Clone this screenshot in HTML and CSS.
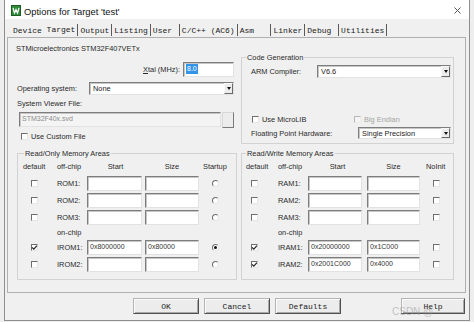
FILE: index.html
```html
<!DOCTYPE html>
<html>
<head>
<meta charset="utf-8">
<title>Options for Target 'test'</title>
<link rel="stylesheet" href="styles.css">
</head>
<body>
<div class="window">
  <div class="titlebar">
    <svg class="appicon" width="10" height="11" viewBox="0 0 10 11">
      <rect x="0.5" y="0.5" width="9" height="10" fill="#2f8a3a" stroke="#1d5e25"/>
      <path d="M2 3 L3.5 8 L5 4.5 L6.5 8 L8 3" fill="none" stroke="#ffffff" stroke-width="1.2"/>
    </svg>
    <span class="title">Options for Target 'test'</span>
    <svg class="close" width="7" height="7" viewBox="0 0 7 7">
      <path d="M0.5 0.5 L6.5 6.5 M6.5 0.5 L0.5 6.5" stroke="#555" stroke-width="1"/>
    </svg>
  </div>

  <div class="tabs">
    <span class="tab">Device </span><span class="tab sel">Target</span><span class="sep"></span><span class="tab">Output</span><span class="sep"></span><span class="tab">Listing</span><span class="sep"></span><span class="tab">User </span><span class="sep"></span><span class="tab">C/C++ (AC6)</span><span class="sep"></span><span class="tab">Asm   </span><span class="sep"></span><span class="tab">Linker</span><span class="sep"></span><span class="tab">Debug </span><span class="sep"></span><span class="tab">Utilities</span><span class="sep"></span>
  </div>

  <div class="page">
    <div class="top">
      <div class="col-left">
        <div class="device">STMicroelectronics STM32F407VETx</div>
        <div class="row xtal">
          <span class="lbl"><u>X</u>tal (MHz):</span>
          <span class="input xtal-in"><span class="hl">8.0</span></span>
        </div>
        <div class="row os">
          <span class="lbl">Operating system:</span>
          <span class="select os-sel">None<span class="drop"><i class="tri"></i></span></span>
        </div>
        <div class="svf">System Viewer File:</div>
        <div class="row svf-row">
          <span class="input disabled svf-in">STM32F40x.svd</span>
          <span class="dots"></span>
        </div>
        <div class="row chk custom"><span class="cb"></span><span>Use Custom File</span></div>
      </div>

      <div class="group codegen">
        <span class="legend">Code Generation</span>
        <div class="row arm">
          <span class="lbl">ARM Compiler:</span>
          <span class="select arm-sel">V6.6<span class="drop"><i class="tri"></i></span></span>
        </div>
        <div class="row chk micro">
          <span class="cb"></span><span class="micro-lbl">Use MicroLIB</span>
          <span class="cb dis"></span><span class="dis-txt">Big Endian</span>
        </div>
        <div class="row fp">
          <span class="lbl">Floating Point Hardware:</span>
          <span class="select fp-sel">Single Precision<span class="drop"><i class="tri"></i></span></span>
        </div>
      </div>
    </div>

    <div class="mem">
      <div class="group ro">
        <span class="legend">Read/Only Memory Areas</span>
        <div class="memgrid">
          <span class="hd c1">default</span><span class="hd c2">off-chip</span><span class="hd c3">Start</span><span class="hd c4">Size</span><span class="hd c5">Startup</span>

          <span class="c1"><span class="cb"></span></span><span class="c2">ROM1:</span><span class="input c3"></span><span class="input c4"></span><span class="c5"><span class="radio"></span></span>
          <span class="c1"><span class="cb"></span></span><span class="c2">ROM2:</span><span class="input c3"></span><span class="input c4"></span><span class="c5"><span class="radio"></span></span>
          <span class="c1"><span class="cb"></span></span><span class="c2">ROM3:</span><span class="input c3"></span><span class="input c4"></span><span class="c5"><span class="radio"></span></span>

          <span class="c1"></span><span class="c2">on-chip</span><span class="c3"></span><span class="c4"></span><span class="c5"></span>

          <span class="c1"><span class="cb on"><svg viewBox="0 0 7 7" width="7" height="7"><path d="M1 3.4 L2.8 5.2 L6 1.6" fill="none" stroke="#222" stroke-width="1.2"/></svg></span></span><span class="c2">IROM1:</span><span class="input c3">0x8000000</span><span class="input c4">0x80000</span><span class="c5"><span class="radio on"></span></span>
          <span class="c1"><span class="cb"></span></span><span class="c2">IROM2:</span><span class="input c3"></span><span class="input c4"></span><span class="c5"><span class="radio"></span></span>
        </div>
      </div>

      <div class="group rw">
        <span class="legend">Read/Write Memory Areas</span>
        <div class="memgrid">
          <span class="hd c1">default</span><span class="hd c2">off-chip</span><span class="hd c3">Start</span><span class="hd c4">Size</span><span class="hd c5">NoInit</span>

          <span class="c1"><span class="cb"></span></span><span class="c2">RAM1:</span><span class="input c3"></span><span class="input c4"></span><span class="c5"><span class="cb"></span></span>
          <span class="c1"><span class="cb"></span></span><span class="c2">RAM2:</span><span class="input c3"></span><span class="input c4"></span><span class="c5"><span class="cb"></span></span>
          <span class="c1"><span class="cb"></span></span><span class="c2">RAM3:</span><span class="input c3"></span><span class="input c4"></span><span class="c5"><span class="cb"></span></span>

          <span class="c1"></span><span class="c2">on-chip</span><span class="c3"></span><span class="c4"></span><span class="c5"></span>

          <span class="c1"><span class="cb on"><svg viewBox="0 0 7 7" width="7" height="7"><path d="M1 3.4 L2.8 5.2 L6 1.6" fill="none" stroke="#222" stroke-width="1.2"/></svg></span></span><span class="c2">IRAM1:</span><span class="input c3">0x20000000</span><span class="input c4">0x1C000</span><span class="c5"><span class="cb"></span></span>
          <span class="c1"><span class="cb on"><svg viewBox="0 0 7 7" width="7" height="7"><path d="M1 3.4 L2.8 5.2 L6 1.6" fill="none" stroke="#222" stroke-width="1.2"/></svg></span></span><span class="c2">IRAM2:</span><span class="input c3">0x2001C000</span><span class="input c4">0x4000</span><span class="c5"><span class="cb"></span></span>
        </div>
      </div>
    </div>
  </div>

  <div class="footer">
    <span class="btn">OK</span>
    <span class="btn">Cancel</span>
    <span class="btn">Defaults</span>
    <span class="btn help">Help</span>
  </div>
</div>
<div class="watermark">CSDN @</div>
</body>
</html>
```

FILE: styles.css
```css
* { box-sizing: border-box; }
html, body { margin: 0; padding: 0; }
body {
  width: 474px;
  height: 322px;
  overflow: hidden;
  position: relative;
  background: #eeeeee;
  font-family: "Liberation Sans", Arial, sans-serif;
  font-size: 7.4px;
  color: #2a2a2a;
}

.window {
  margin-left: 4px;
  width: 466px;
  height: 321px;
  border: 1px solid #8e8e8e;
  border-top: none;
  background: #f0f0f0;
  display: flex;
  flex-direction: column;
}

/* title bar */
.titlebar {
  height: 19px;
  flex: none;
  background: #ffffff;
  display: flex;
  align-items: center;
  padding: 0 8px 0 6px;
}
.appicon { flex: none; margin-top: 2px; }
.title {
  margin-left: 3px;
  font-size: 9.4px;
  color: #111;
  margin-top: 3px;
}
.close { margin-left: auto; margin-top: 1px; }

/* tabs */
.tabs {
  height: 18px;
  flex: none;
  display: flex;
  align-items: flex-end;
  padding: 0 0 1px 8px;
  font-family: "Liberation Mono", "DejaVu Sans Mono", monospace;
  font-size: 8px;
  line-height: 10px;
  white-space: pre;
  color: #1a1a1a;
}
.tab.sel { margin-bottom: 1px; }
.sep {
  display: inline-block;
  width: 1px;
  height: 12px;
  margin: 0 2px 0 2px;
  background: #5a5a5a;
}

/* page */
.page {
  margin: 0 3px 0 2px;
  height: 256px;
  flex: none;
  border: 1px solid #b0b0b0;
  padding: 0 11px 0 8px;
}
.top {
  display: flex;
  gap: 7px;
}
.col-left {
  width: 218px;
  display: flex;
  flex-direction: column;
}
.row { display: flex; align-items: center; }
.device { margin-top: 6px; height: 10px; line-height: 10px; }
.xtal { margin-top: 8px; height: 14px; justify-content: flex-end; gap: 3px; }
.xtal-in { width: 51px; height: 14px; padding: 1px 0 0 2px; }
.hl {
  display: inline-block;
  background: #3393e6;
  color: #fff;
  padding: 0 1px;
  line-height: 10px;
}
.os { margin-top: 6px; height: 13px; padding-left: 1px; }
.os-sel { margin-left: auto; width: 145px; }
.svf { margin-top: 4px; height: 10px; line-height: 10px; padding-left: 1px; }
.svf-row { margin-top: 3px; height: 15px; padding-left: 3px; }
.svf-in { width: 202px; height: 15px; padding: 2px 0 0 2px; }
.dots {
  width: 12px;
  height: 16px;
  margin-left: 1px;
  background: #ececec;
  border: 1px solid;
  border-color: #d8d8d8 #7a7a7a #7a7a7a #d8d8d8;
}
.custom { margin-top: 4px; height: 10px; padding-left: 5px; gap: 3px; }

/* inputs */
.input {
  display: block;
  background: #fff;
  border: 1px solid;
  border-color: #7d7d7d #e2e2e2 #e2e2e2 #7d7d7d;
  box-shadow: inset 1px 1px 0 #c6c6c6;
  height: 15px;
  font-size: 7px;
  line-height: 9px;
  padding: 1px 0 0 2px;
  color: #333;
}
.input.disabled { background: #f4f4f4; color: #8c8c8c; }

.select {
  position: relative;
  display: flex;
  align-items: center;
  height: 13px;
  background: #fff;
  border: 1px solid;
  border-color: #7d7d7d #e2e2e2 #e2e2e2 #7d7d7d;
  box-shadow: inset 1px 1px 0 #c6c6c6;
  padding-left: 3px;
  color: #222;
}
.drop {
  margin-left: auto;
  width: 9px;
  height: 100%;
  background: #ececec;
  border: 1px solid;
  border-color: #f8f8f8 #6a6a6a #6a6a6a #f8f8f8;
  display: flex;
  align-items: center;
  justify-content: center;
}
.tri {
  width: 0;
  height: 0;
  border-left: 2.5px solid transparent;
  border-right: 2.5px solid transparent;
  border-top: 3px solid #111;
}

/* checkboxes / radios */
.cb {
  display: inline-block;
  flex: none;
  width: 7px;
  height: 7px;
  background: #fff;
  border: 1px solid;
  border-color: #6e6e6e #e6e6e6 #e6e6e6 #6e6e6e;
  position: relative;
}
.cb svg { position: absolute; left: -1px; top: -1px; }
.cb.dis { border-color: #b8b8b8 #ececec #ececec #b8b8b8; background: #f4f4f4; }
.dis-txt { color: #a4a4a4; margin-left: 3px; }
.radio {
  display: inline-block;
  width: 7px;
  height: 7px;
  border-radius: 50%;
  background: #fff;
  border: 1px solid;
  border-color: #6e6e6e #e6e6e6 #e6e6e6 #6e6e6e;
  position: relative;
}
.radio.on::after {
  content: "";
  position: absolute;
  left: 1px;
  top: 1px;
  width: 3px;
  height: 3px;
  border-radius: 50%;
  background: #111;
}

/* groups */
.group {
  position: relative;
  border: 1px solid #d2d2d2;
}
.legend {
  position: absolute;
  top: -5px;
  left: 4px;
  line-height: 9px;
  padding: 0 1px;
  background: #f0f0f0;
  color: #2a2a2a;
}
.codegen {
  width: 213px;
  height: 87px;
  margin-top: 19px;
  padding: 7px 2px 0 9px;
  display: flex;
  flex-direction: column;
}
.arm { height: 13px; }
.arm-sel { margin-left: auto; width: 134px; }
.micro { margin-top: 36px; height: 10px; padding-left: 1px; }
.micro-lbl { margin-left: 3px; width: 92px; }
.fp { margin-top: 3px; height: 12px; }
.fp-sel { margin-left: auto; width: 93px; height: 12px; }

/* memory areas */
.mem {
  display: flex;
  gap: 4px;
  margin-top: 9px;
  padding-left: 1px;
}
.ro { width: 220px; height: 127px; }
.ro .legend { left: 6px; }
.rw { width: 213px; height: 127px; }
.memgrid {
  display: grid;
  grid-template-rows: 16px 15px 15px 15px 11px 15px 15px;
  row-gap: 2px;
  padding-top: 4px;
  align-items: center;
}
.ro .memgrid { grid-template-columns: 33px 36px 58px 54px 1fr; }
.rw .memgrid { grid-template-columns: 24px 42px 59px 53px 1fr; }
.memgrid > span { display: flex; align-items: center; }
.memgrid .input { display: block; }
.memgrid .c3.input { width: 55px; }
.memgrid .c4.input { width: 54px; }
.rw .memgrid .c3.input { width: 54px; }
.rw .memgrid .c4.input { width: 53px; }
.memgrid .hd.c3, .memgrid .hd.c4 { justify-content: center; }
.ro .memgrid .hd.c3 { padding-right: 1px; }
.ro .c1 { padding-left: 13px; }
.ro .hd.c1 { padding-left: 5px; }
.ro .c2 { padding-left: 6px; }
.ro .c5 { padding-left: 13px; }
.ro .hd.c5 { padding-left: 4px; }
.rw .c1 { padding-left: 9px; }
.rw .hd.c1 { padding-left: 4px; }
.rw .c2 { padding-left: 12px; }
.rw .hd.c2 { padding-left: 12px; }
.rw .c5 { padding-left: 13px; }
.rw .hd.c5 { padding-left: 6px; }
.ro .hd.c4 { padding-right: 0; }
.rw .hd.c3 { padding-right: 0; }

/* footer */
.footer {
  display: flex;
  gap: 5px;
  margin-top: 5px;
  padding: 0 4px 0 128px;
}
.btn {
  width: 66px;
  height: 16px;
  display: flex;
  align-items: center;
  justify-content: center;
  background: #ececec;
  border: 1px solid;
  border-color: #b4b4b4 #505050 #505050 #b4b4b4;
  box-shadow: inset 1px 1px 0 #fbfbfb, inset -1px -1px 0 #a8a8a8;
  font-family: "Liberation Mono", "DejaVu Sans Mono", monospace;
  font-size: 8px;
  color: #1c1c1c;
}
.btn.help { margin-left: auto; width: 64px; }

.watermark {
  position: absolute;
  left: 392px;
  top: 306px;
  font-size: 10px;
  line-height: 12px;
  color: rgba(150, 150, 150, 0.55);
  pointer-events: none;
}
```
